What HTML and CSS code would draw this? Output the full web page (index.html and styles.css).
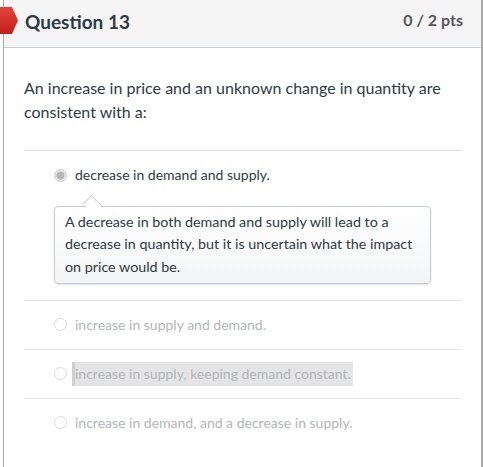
FILE: index.html
```html
<!DOCTYPE html>
<html>
<head>
<meta charset="utf-8">
<link rel="stylesheet" href="styles.css">
</head>
<body>
<div class="card">
  <div class="header">
    <span class="flag"></span>
    <h2 class="title">Question 13</h2>
    <span class="pts">0 / 2 pts</span>
  </div>
  <div class="body">
    <p class="question">An increase in price and an unknown change in quantity are consistent with a:</p>
    <div class="answers">
      <div class="answer selected">
        <div class="row"><span class="radio checked"></span><span class="label">decrease in demand and supply.</span></div>
        <div class="comment">A decrease in both demand and supply will lead to a decrease in quantity, but it is uncertain what the impact on price would be.</div>
      </div>
      <div class="answer">
        <div class="row"><span class="radio"></span><span class="label">increase in supply and demand.</span></div>
      </div>
      <div class="answer">
        <div class="row"><span class="radio"></span><span class="label hl">increase in supply, keeping demand constant.</span></div>
      </div>
      <div class="answer">
        <div class="row"><span class="radio"></span><span class="label">increase in demand, and a decrease in supply.</span></div>
      </div>
    </div>
  </div>
</div>
</body>
</html>
```

FILE: styles.css
```css
* { box-sizing: border-box; }
html, body { margin: 0; padding: 0; background: #fff; }
body { font-family: Lato, "Open Sans", sans-serif; color: #2d3b45; }
.card {
  margin-left: 3px;
  width: 480px;
  height: 467px;
  border-left: 1px solid #aaa;
  border-right: 2px solid #aaa;
  background: #fff;
}
.header {
  position: relative;
  height: 48px;
  background: #f5f5f5;
  border-bottom: 1px solid #c7cdd1;
  display: flex;
  align-items: flex-start;
  padding: 0 18px 0 21px;
}
.flag {
  position: absolute;
  left: -4px;
  top: 7px;
  width: 18px;
  height: 27px;
  background: linear-gradient(#e5433e, #c21f1b);
  clip-path: polygon(0 0, 12px 0, 18px 13.5px, 12px 27px, 0 27px);
}
.title {
  margin: 10px 0 0 0;
  font-size: 19px;
  font-weight: 700;
  color: #2d3b45;
  line-height: 24px;
  flex: 1;
}
.pts {
  margin-top: 9px;
  font-size: 16px;
  font-weight: 700;
  color: #555;
  line-height: 22px;
}
.body { padding: 28px 19px 0 20px; }
.question {
  margin: 0;
  font-size: 16px;
  line-height: 24px;
  color: #2d3b45;
  padding-bottom: 26px;
  border-bottom: 1px solid #ddd;
}
.answer {
  border-bottom: 1px solid #e6e6e6;
  padding: 14px 0 14px 30px;
}
.answer:last-child { border-bottom: none; }
.row { display: flex; align-items: center; height: 20px; }
.radio {
  width: 13px;
  height: 13px;
  border-radius: 50%;
  border: 1px solid #dcdcdc;
  background: #fff;
  margin-right: 8px;
  flex: none;
}
.radio.checked {
  border-color: #ccc;
  background: radial-gradient(circle, #b7b7b7 0 3.5px, #eaeaea 4.5px);
}
.label { font-size: 14px; color: #b2b6b9; line-height: 20px; }
.selected .label { color: #2d3b45; }
.label.hl {
  background: #e4e4e4;
  border-left: 3px solid #cfcfcf;
  padding: 2px 2px 2px 0;
  margin-left: -3px;
}
.comment {
  position: relative;
  margin: 21px 0 2px 0;
  width: 377px;
  padding: 4px 10px 5px 10px;
  font-size: 14.3px;
  line-height: 22.3px;
  color: #2d3b45;
  border: 1px solid #c7cdd1;
  border-radius: 4px;
  background: linear-gradient(#fff, #f3f4f5);
  box-shadow: 0 1px 2px rgba(0,0,0,0.12);
}
.comment::before {
  content: "";
  position: absolute;
  left: 30px;
  top: -10px;
  width: 14px;
  height: 14px;
  background: #fff;
  border-left: 1px solid #c7cdd1;
  border-top: 1px solid #c7cdd1;
  transform: rotate(45deg) scaleY(0.8);
}
```
